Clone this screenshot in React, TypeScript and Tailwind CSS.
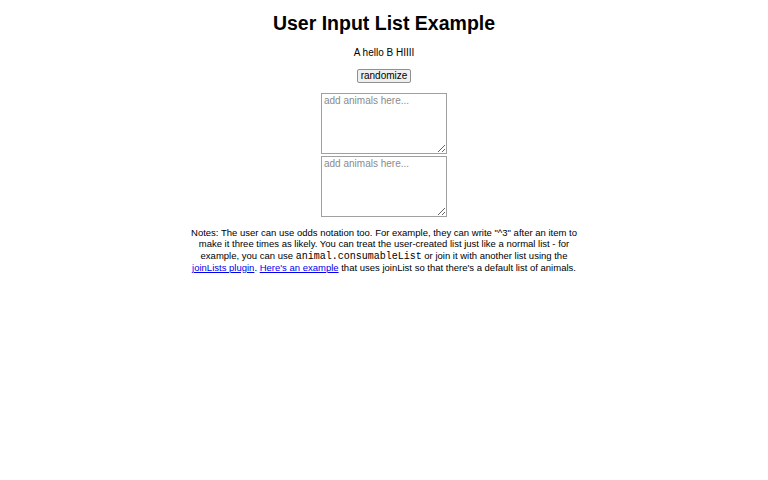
import { useState } from "react";

const animals = ["A", "B", "C", "D"];
const words = ["hello", "HIIII", "hey", "yo"];

function pick<T>(list: T[]) {
    return list[Math.floor(Math.random() * list.length)];
}

export default function App() {
    const [line, setLine] = useState("A hello B HIIII");

    const randomize = () => {
        setLine(`${pick(animals)} ${pick(words)} ${pick(animals)} ${pick(words)}`);
    };

    const areaClass =
        "block w-[126px] h-[61px] resize-y border border-[#a0a0a0] bg-white px-[2px] py-[1px] text-[10px] leading-[12px] text-black placeholder:text-[#8a8a8a] outline-none";

    return (
        <div className="min-h-screen bg-white font-['Liberation_Sans',Arial,sans-serif] text-black">
            <div className="flex flex-col items-center pt-[11px]">
                <h1 className="text-[19.5px] font-bold leading-[24px]">
                    User Input List Example
                </h1>

                <p className="mt-[12px] text-[10px] leading-[12px]">{line}</p>

                <button
                    onClick={randomize}
                    className="mt-[10px] rounded-[2px] border border-[#8f8f8f] bg-[#efefef] px-[3px] text-[10px] leading-[12px]"
                >
                    randomize
                </button>

                <div className="mt-[10px] flex flex-col gap-[2px]">
                    <textarea className={areaClass} placeholder="add animals here..." />
                    <textarea className={areaClass} placeholder="add animals here..." />
                </div>

                <p className="mt-[10px] w-[400px] text-center text-[9.5px] leading-[11.3px]">
                    Notes: The user can use odds notation too. For example, they can write
                    "^3" after an item to make it three times as likely. You can treat the
                    user-created list just like a normal list - for example, you can use{" "}
                    <code className="font-['Liberation_Mono',monospace] text-[10px] leading-none">
                        animal.consumableList
                    </code>{" "}
                    or join it with another list using the{" "}
                    <a href="#" className="text-[#0000ee] underline">
                        joinLists plugin
                    </a>
                    .{" "}
                    <a href="#" className="text-[#0000ee] underline">
                        Here's an example
                    </a>{" "}
                    that uses joinList so that there's a default list of animals.
                </p>
            </div>
        </div>
    );
}
